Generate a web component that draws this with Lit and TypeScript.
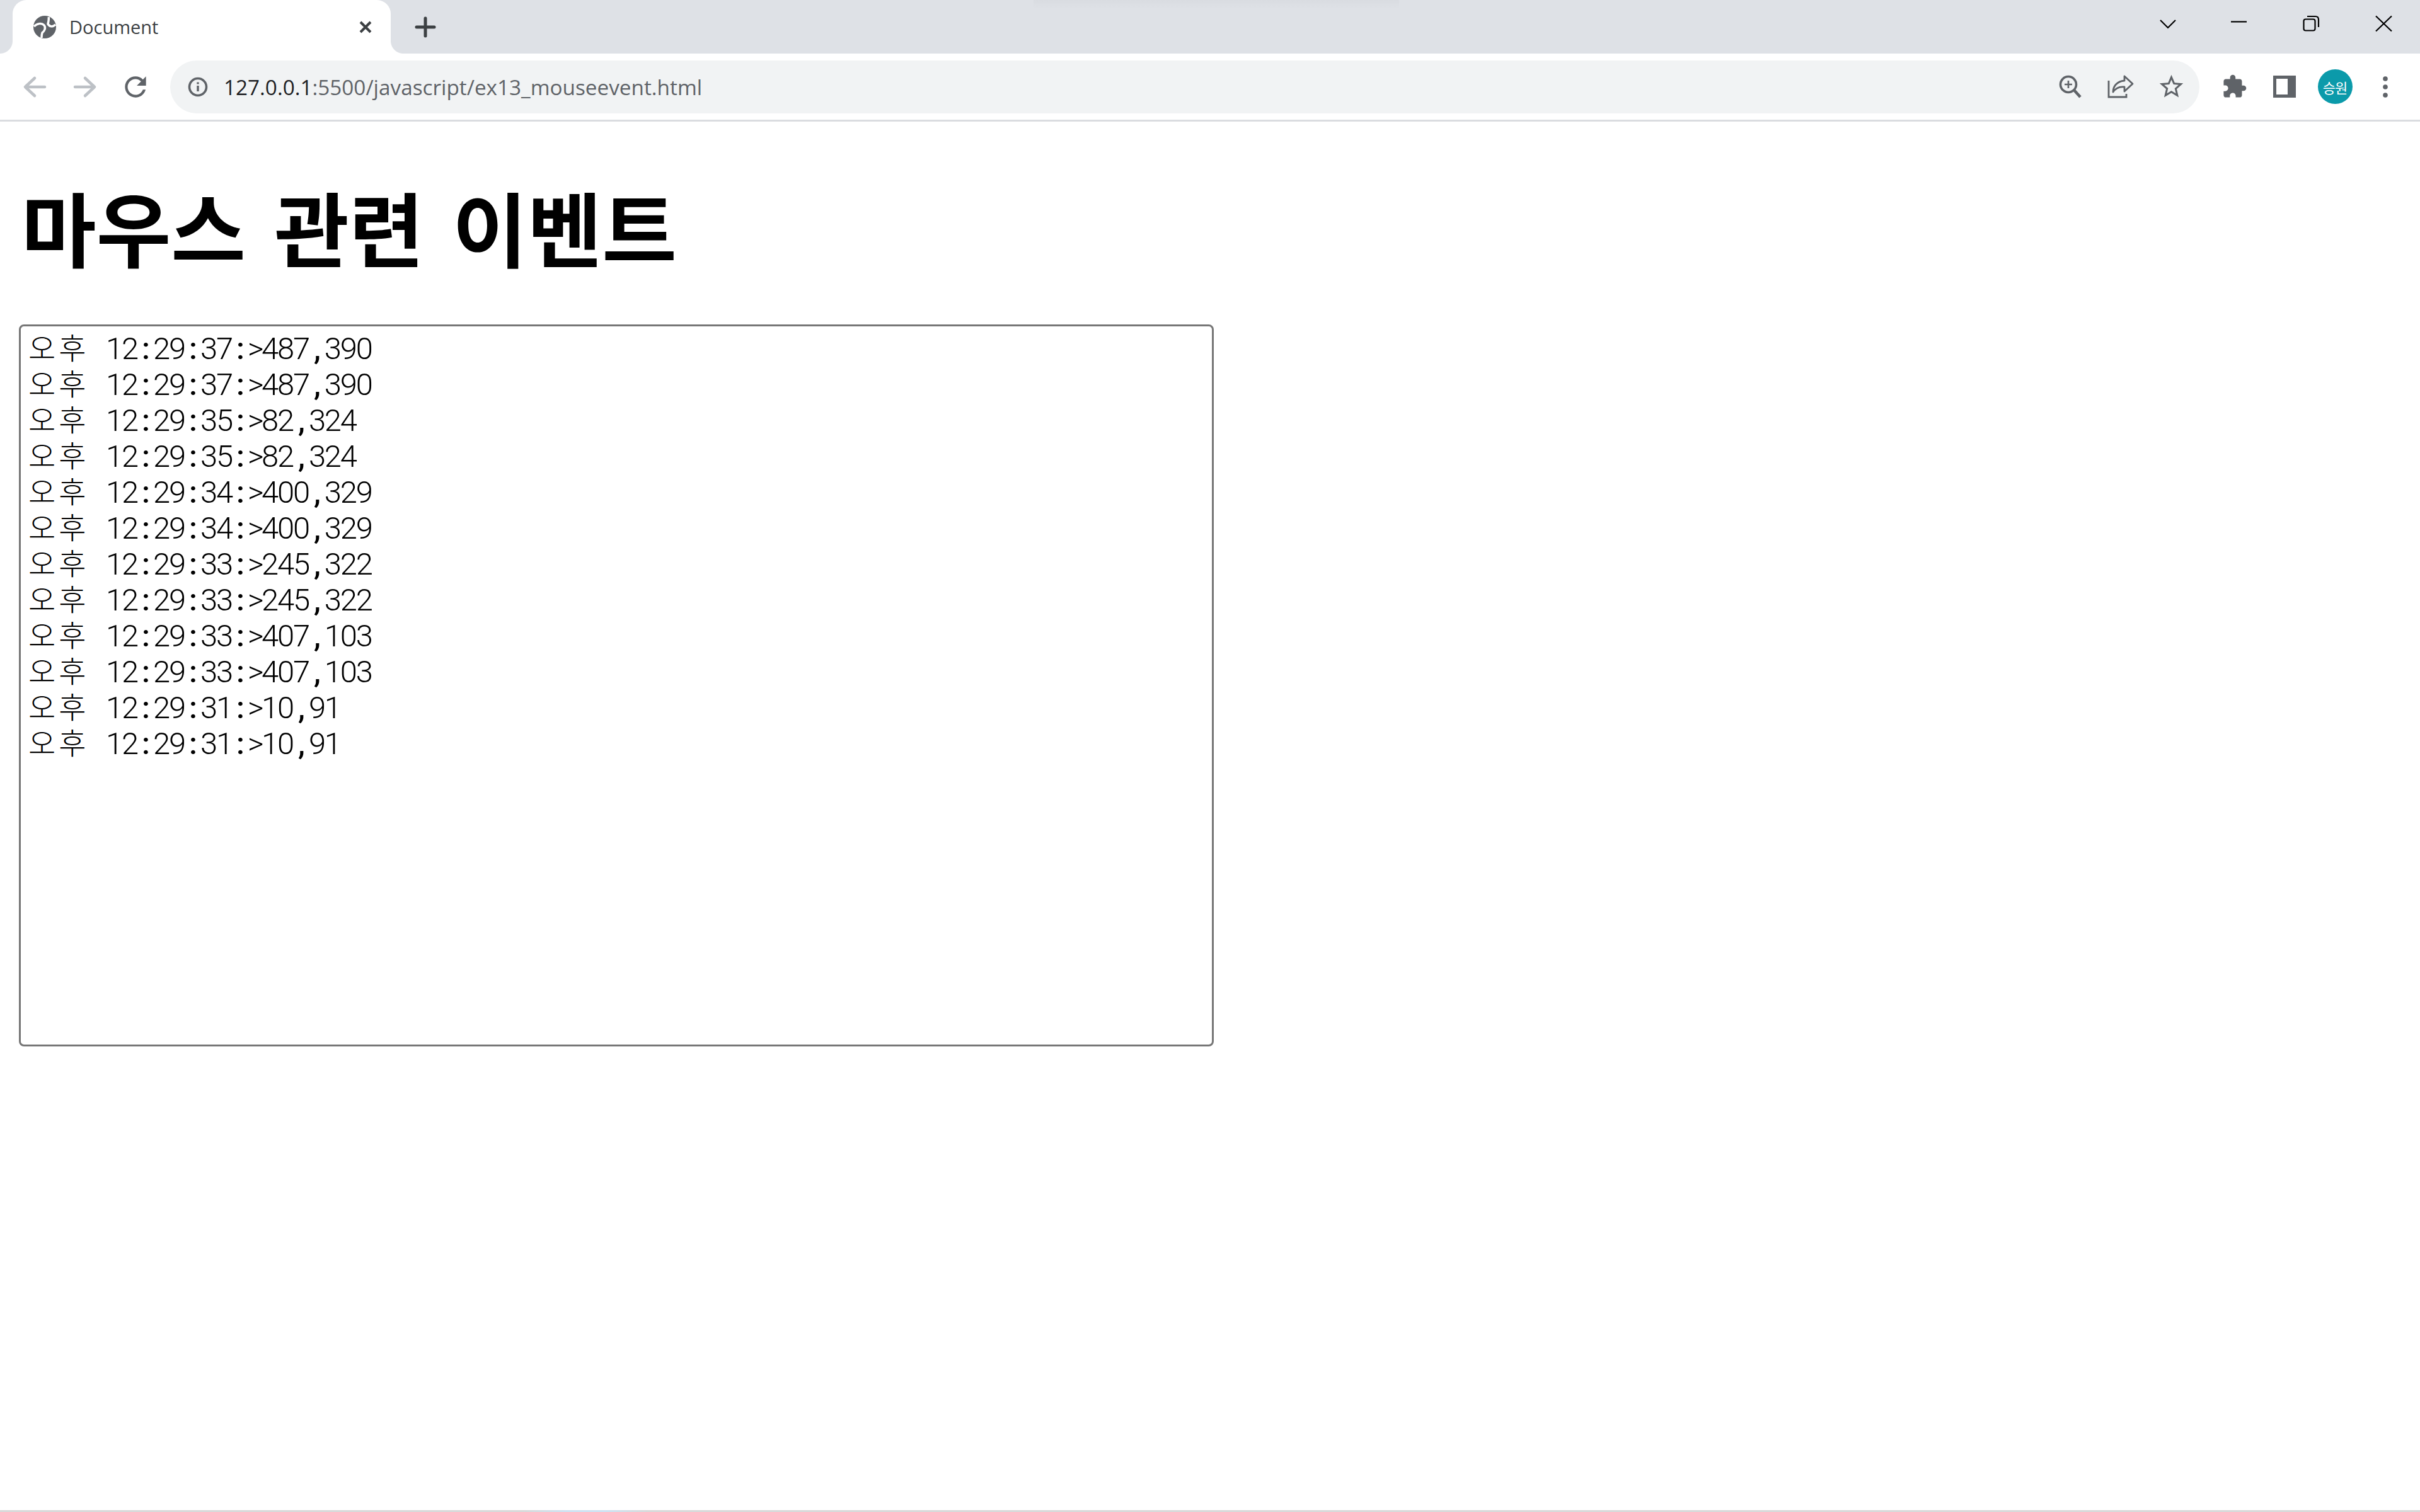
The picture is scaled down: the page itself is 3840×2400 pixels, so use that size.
import { LitElement, html, css } from "lit";
import { customElement } from "lit/decorators.js";

const LOG = [
  "12:29:37:>487,390",
  "12:29:37:>487,390",
  "12:29:35:>82,324",
  "12:29:35:>82,324",
  "12:29:34:>400,329",
  "12:29:34:>400,329",
  "12:29:33:>245,322",
  "12:29:33:>245,322",
  "12:29:33:>407,103",
  "12:29:33:>407,103",
  "12:29:31:>10,91",
  "12:29:31:>10,91",
];

@customElement("app-root")
export class AppRoot extends LitElement {
  static styles = css`
    :host {
      display: flex;
      flex-direction: column;
      min-height: 2400px;
      background: #fff;
      font-family: "Liberation Sans", "Noto Sans CJK KR", sans-serif;
      color: #000;
    }
    .strip {
      position: relative;
      display: flex;
      align-items: center;
      height: 85px;
      background: #dee1e6;
      flex: none;
    }
    .strip::before {
      content: "";
      position: absolute;
      left: 1640px;
      top: 0;
      width: 580px;
      height: 14px;
      background: linear-gradient(#d9dce1, #dee1e6);
    }
    .tab {
      position: relative;
      display: flex;
      align-items: center;
      box-sizing: border-box;
      width: 600px;
      height: 85px;
      margin-left: 20px;
      padding-left: 32px;
      background: #fff;
      border-radius: 22px 22px 0 0;
    }
    .tab::before,
    .tab::after {
      content: "";
      position: absolute;
      bottom: 0;
      width: 20px;
      height: 20px;
    }
    .tab::before {
      left: -20px;
      background: radial-gradient(circle at 0 0, #dee1e6 19.5px, #fff 20.5px);
    }
    .tab::after {
      right: -20px;
      background: radial-gradient(circle at 100% 0, #dee1e6 19.5px, #fff 20.5px);
    }
    .tab-title {
      flex: 1;
      margin-left: 20px;
      font-family: "Open Sans", sans-serif;
      font-size: 29px;
      color: #3c4043;
    }
    .tab-x {
      margin-right: 28px;
      display: block;
    }
    .plus {
      margin-left: 38px;
      display: block;
    }
    .win {
      margin-left: auto;
      display: flex;
      align-items: center;
      height: 75px;
      padding-bottom: 10px;
      margin-right: 44px;
      position: relative;
    }
    .win svg {
      display: block;
      margin-left: 88px;
    }
    .win svg:first-child {
      margin-left: 0;
      margin-right: -2px;
    }
    .toolbar {
      display: flex;
      align-items: center;
      height: 105px;
      padding: 0 15px;
      border-bottom: 3px solid #dadce0;
      flex: none;
    }
    .btn {
      width: 80px;
      height: 80px;
      display: flex;
      align-items: center;
      justify-content: center;
      flex: none;
    }
    .omni {
      flex: 1;
      display: flex;
      align-items: center;
      height: 84px;
      margin: 0 15px;
      padding: 0 5px 0 14px;
      background: #f1f3f4;
      border-radius: 42px;
    }
    .info {
      width: 60px;
      display: flex;
      justify-content: center;
    }
    .url {
      flex: 1;
      margin-left: 11px;
      font-family: "Open Sans", sans-serif;
      font-size: 33.3px;
      color: #5f6368;
      white-space: nowrap;
    }
    .url b {
      font-weight: 400;
      color: #202124;
    }
    .panel {
      box-sizing: border-box;
      width: 36px;
      height: 35px;
      border: 5px solid #5f6368;
      border-right-width: 13px;
      background: #fff;
    }
    .avatar {
      width: 55px;
      height: 55px;
      border-radius: 50%;
      background: #0b9aaa;
      color: #fff;
      font-family: "Noto Sans CJK KR", sans-serif;
      font-size: 22px;
      display: flex;
      align-items: center;
      justify-content: center;
      letter-spacing: -1px;
    }
    main {
      flex: 1;
      padding-left: 30px;
    }
    h1 {
      margin: 71px 0 0 4px;
      height: 251px;
      line-height: 190px;
      font-family: "Noto Sans CJK KR", sans-serif;
      font-weight: 700;
      font-size: 129px;
      word-spacing: 16px;
      white-space: nowrap;
    }
    .box {
      box-sizing: border-box;
      width: 1896px;
      height: 1146px;
      padding: 3px 11px;
      border: 3px solid #767676;
      border-radius: 8px;
      font-family: Roboto, "Liberation Sans", sans-serif;
      font-weight: 300;
      font-size: 49px;
      letter-spacing: -2.2px;
    }
    .line {
      display: flex;
      align-items: baseline;
      height: 57px;
      line-height: 57px;
      white-space: pre;
    }
    .ko {
      display: inline-block;
      width: 124px;
      font-family: "Noto Sans CJK KR", sans-serif;
      font-weight: 300;
      font-size: 47px;
      letter-spacing: 5px;
      padding-left: 1px;
      box-sizing: border-box;
    }
    .p {
      display: inline-block;
      width: 25px;
      text-align: center;
      font-weight: 500;
    }
    .gt {
      display: inline-block;
      width: 22px;
      text-align: center;
    }
    .foot {
      height: 3px;
      flex: none;
      background: linear-gradient(
        90deg,
        #d9d9d9 0,
        #d9d9d9 830px,
        #cfe2f2 900px,
        #cfe2f2 960px,
        #d9d9d9 1030px,
        #d9d9d9 100%
      );
    }
  `;

  private chars(s: string) {
    return [...s].map((c) =>
      c === ":" || c === ","
        ? html`<span class="p">${c}</span>`
        : c === ">"
          ? html`<span class="gt">${c}</span>`
          : c,
    );
  }

  render() {
    return html`
      <div class="strip">
        <div class="tab">
          <svg width="38" height="38" viewBox="0 0 38 38">
            <circle cx="19" cy="19" r="18" fill="#5f6368" />
            <path d="M2 18 C7 13 14 12 18 16 C21 20 19 25 15 28 C14 31 14 33 14 36" fill="none" stroke="#fff" stroke-width="3.5" />
            <path d="M36 15 C32 19 27 19 24 14 C25 10 26 6 25 3" fill="none" stroke="#fff" stroke-width="3.5" />
          </svg>
          <span class="tab-title">Document</span>
          <svg class="tab-x" width="24" height="24" viewBox="0 0 24 24">
            <path d="M4 4 L20 20 M20 4 L4 20" stroke="#3c4043" stroke-width="4" />
          </svg>
        </div>
        <svg class="plus" width="34" height="34" viewBox="0 0 34 34">
          <path d="M17 3 V31 M3 17 H31" stroke="#3c4043" stroke-width="5" stroke-linecap="round" />
        </svg>
        <div class="win">
          <svg width="28" height="18" viewBox="0 0 28 18">
            <path d="M2 3 L14 15 L26 3" fill="none" stroke="#000" stroke-width="2.2" />
          </svg>
          <svg width="27" height="27" viewBox="0 0 27 27" style="margin-left:87px">
            <path d="M1 10.5 H26" stroke="#000" stroke-width="2.2" />
          </svg>
          <svg width="27" height="27" viewBox="0 0 27 27">
            <rect x="1.5" y="6.5" width="18" height="18" rx="3" fill="none" stroke="#000" stroke-width="2.2" />
            <path d="M7 2 H20 C23 2 25 4 25 7 V19" fill="none" stroke="#000" stroke-width="2.2" />
          </svg>
          <svg width="27" height="27" viewBox="0 0 27 27">
            <path d="M1 1.5 L26 25.5 M26 1.5 L1 25.5" stroke="#000" stroke-width="2.2" />
          </svg>
        </div>
      </div>

      <div class="toolbar">
        <div class="btn">
          <svg width="40" height="40" viewBox="0 0 40 40">
            <path d="M36 20 H6 M20 6 L5 20 L20 34" fill="none" stroke="#bdc1c6" stroke-width="4.5" stroke-linecap="round" stroke-linejoin="round" />
          </svg>
        </div>
        <div class="btn">
          <svg width="40" height="40" viewBox="0 0 40 40">
            <path d="M4 20 H34 M20 6 L35 20 L20 34" fill="none" stroke="#bdc1c6" stroke-width="4.5" stroke-linecap="round" stroke-linejoin="round" />
          </svg>
        </div>
        <div class="btn">
          <svg width="50" height="50" viewBox="0 0 24 24">
            <path fill="#5f6368" d="M17.65 6.35C16.2 4.9 14.21 4 12 4c-4.42 0-7.99 3.58-7.99 8s3.57 8 7.99 8c3.73 0 6.84-2.55 7.73-6h-2.08c-.82 2.33-3.04 4-5.65 4-3.31 0-6-2.69-6-6s2.69-6 6-6c1.66 0 3.14.69 4.22 1.78L13 11h7V4l-2.35 2.35z" />
          </svg>
        </div>
        <div class="omni">
          <div class="info">
            <svg width="32" height="32" viewBox="0 0 32 32">
              <circle cx="16" cy="16" r="13.5" fill="none" stroke="#5f6368" stroke-width="3.6" />
              <path d="M16 14 V23 M16 8.5 V11.5" stroke="#5f6368" stroke-width="3.4" />
            </svg>
          </div>
          <span class="url"><b>127.0.0.1</b>:5500/javascript/ex13_mouseevent.html</span>
          <div class="btn">
            <svg width="40" height="40" viewBox="0 0 40 40">
              <circle cx="17" cy="16" r="12.5" fill="none" stroke="#5f6368" stroke-width="3.6" />
              <path d="M17 10 V22 M11 16 H23" stroke="#5f6368" stroke-width="2.6" />
              <path d="M26 25 L36 36" stroke="#5f6368" stroke-width="4.6" />
            </svg>
          </div>
          <div class="btn">
            <svg width="48" height="40" viewBox="0 0 48 40">
              <path d="M5 10 V36 H33 V31" fill="none" stroke="#5f6368" stroke-width="2.8" />
              <path d="M30 3 L43 15 L30 27 V20 C22 19 16 22 12 28 C12 19 18 11 30 10 Z" fill="none" stroke="#5f6368" stroke-width="2.8" stroke-linejoin="round" />
            </svg>
          </div>
          <div class="btn">
            <svg width="45" height="45" viewBox="0 0 24 24">
              <path fill="#5f6368" d="M22 9.24l-7.19-.62L12 2 9.19 8.63 2 9.24l5.46 4.73L5.82 21 12 17.27 18.18 21l-1.63-7.03L22 9.24zM12 15.4l-3.76 2.27 1-4.28-3.32-2.88 4.38-.38L12 6.1l1.71 4.04 4.38.38-3.32 2.88 1 4.28L12 15.4z" />
            </svg>
          </div>
        </div>
        <div class="btn">
          <svg width="41" height="41" viewBox="0 0 24 24">
            <path fill="#5f6368" d="M20.5 11H19V7c0-1.1-.9-2-2-2h-4V3.5C13 2.12 11.88 1 10.5 1S8 2.12 8 3.5V5H4c-1.1 0-1.99.9-1.99 2v3.8H3.5c1.49 0 2.7 1.21 2.7 2.7s-1.21 2.7-2.7 2.7H2V20c0 1.1.9 2 2 2h3.8v-1.5c0-1.49 1.21-2.7 2.7-2.7 1.49 0 2.7 1.21 2.7 2.7V22H17c1.1 0 2-.9 2-2v-4h1.5c1.38 0 2.5-1.12 2.5-2.5S21.88 11 20.5 11z" />
          </svg>
        </div>
        <div class="btn"><div class="panel"></div></div>
        <div class="btn"><div class="avatar">승원</div></div>
        <div class="btn">
          <svg width="10" height="36" viewBox="0 0 10 36">
            <circle cx="5" cy="5" r="3.8" fill="#5f6368" />
            <circle cx="5" cy="18" r="3.8" fill="#5f6368" />
            <circle cx="5" cy="31" r="3.8" fill="#5f6368" />
          </svg>
        </div>
      </div>

      <main>
        <h1>마우스 관련 이벤트</h1>
        <div class="box">
          ${LOG.map(
            (l) => html`<div class="line"><span class="ko">오후 </span>${this.chars(l)}</div>`,
          )}
        </div>
      </main>
      <div class="foot"></div>
    `;
  }
}
